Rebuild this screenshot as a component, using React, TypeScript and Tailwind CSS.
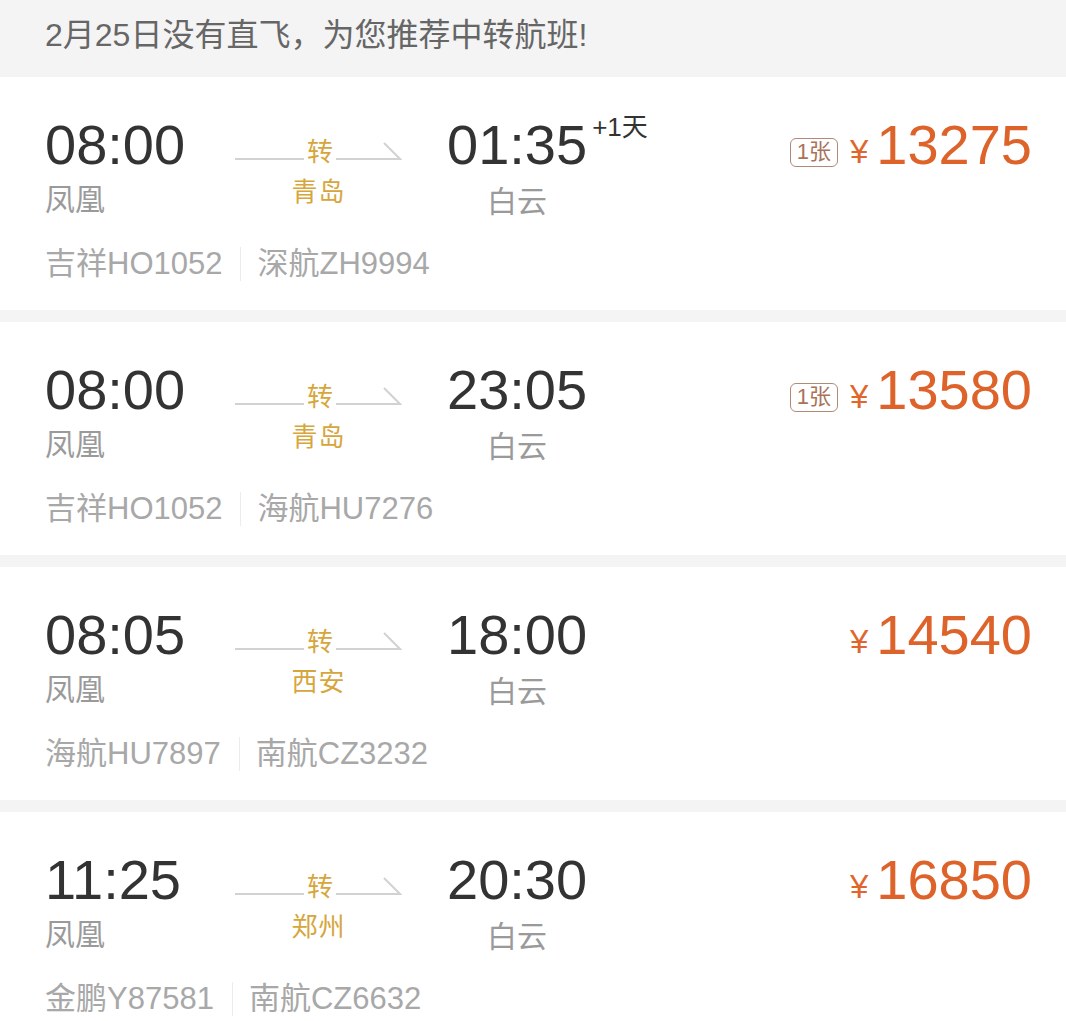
import type { ReactNode } from 'react';

type Flight = {
  dep: string;
  arr: string;
  plusDay?: string;
  from: string;
  via: string;
  to: string;
  price: string;
  tickets?: string;
  legs: [string, string];
};

const flights: Flight[] = [
  { dep: '08:00', arr: '01:35', plusDay: '+1天', from: '凤凰', via: '青岛', to: '白云', price: '13275', tickets: '1张', legs: ['吉祥HO1052', '深航ZH9994'] },
  { dep: '08:00', arr: '23:05', from: '凤凰', via: '青岛', to: '白云', price: '13580', tickets: '1张', legs: ['吉祥HO1052', '海航HU7276'] },
  { dep: '08:05', arr: '18:00', from: '凤凰', via: '西安', to: '白云', price: '14540', legs: ['海航HU7897', '南航CZ3232'] },
  { dep: '11:25', arr: '20:30', from: '凤凰', via: '郑州', to: '白云', price: '16850', legs: ['金鹏Y87581', '南航CZ6632'] },
];

const font = "font-['Liberation_Sans','Noto_Sans_CJK_SC',sans-serif]";

// 中转箭头：左线 + “转” + 右线带箭头
const TransferArrow = ({ via }: { via: string }) => (
  <div className="w-[167px] shrink-0 flex flex-col items-center pt-[26px]">
    <div className="flex items-end w-full h-[26px]">
      <div className="flex-1 h-[2px] bg-[#d2d2d2] mb-[5px]" />
      <span className="px-[3px] text-[26px] leading-[26px] text-[#d6a63c]">转</span>
      <svg width="66" height="20" viewBox="0 0 66 20" className="mb-[4px]">
        <path d="M0 18 H64 L48 2" fill="none" stroke="#d2d2d2" strokeWidth="2" />
      </svg>
    </div>
    <div className="mt-[14px] text-[26px] leading-[26px] text-[#d6a63c] tracking-[1px]">{via}</div>
  </div>
);

const Card = ({ f }: { f: Flight }) => (
  <div className="bg-white h-[233px] shrink-0 pl-[45px] pr-[34px] pt-[36px]">
    <div className="flex">
      {/* 出发 */}
      <div className="w-[190px] shrink-0 flex flex-col">
        <span className="text-[56px] leading-[64px] text-[#333]">{f.dep}</span>
        <span className="mt-[8px] text-[30px] leading-[30px] text-[#9a9a9a]">{f.from}</span>
      </div>

      <TransferArrow via={f.via} />

      {/* 到达 */}
      <div className="ml-[45px] flex flex-col items-center">
        <span className="relative text-[56px] leading-[64px] text-[#333]">
          {f.arr}
          {f.plusDay && (
            <span className="absolute left-full top-[0px] ml-[5px] whitespace-nowrap text-[26px] leading-[28px] text-[#333]">
              {f.plusDay}
            </span>
          )}
        </span>
        <span className="mt-[10px] text-[30px] leading-[30px] text-[#9a9a9a]">{f.to}</span>
      </div>

      {/* 价格 */}
      <div className="flex-1 flex justify-end items-center h-[64px]">
        {f.tickets && (
          <span className="mt-[14px] mr-[12px] h-[29px] px-[6px] flex items-center border border-[#b08a78] rounded-[6px] text-[22px] leading-[22px] text-[#a8735a]">
            {f.tickets}
          </span>
        )}
        <span className="mt-[12px] text-[33px] leading-[33px] text-[#e0662e]">¥</span>
        <span className="ml-[8px] text-[56px] leading-[64px] text-[#de632b]">{f.price}</span>
      </div>
    </div>

    {/* 航班号 */}
    <div className="mt-[30px] flex items-center text-[31px] leading-[30px] text-[#a8a8a8]">
      <span>{f.legs[0]}</span>
      <span className="ml-[18px] mr-[16px] w-px h-[34px] bg-[#ececec]" />
      <span>{f.legs[1]}</span>
    </div>
  </div>
);

const Gap = (): ReactNode => <div className="h-[12px] shrink-0 bg-[#f4f4f4]" />;

export default function App() {
  return (
    <div className={`${font} w-[1066px] h-[1021px] overflow-hidden bg-[#f4f4f4] flex flex-col`}>
      <div className="h-[77px] shrink-0 pl-[45px] pt-[17px] text-[32px] leading-[36px] text-[#666]">
        2月25日没有直飞，为您推荐中转航班!
      </div>
      {flights.map((f, i) => (
        <div key={i} className="flex flex-col">
          {i > 0 && <Gap />}
          <Card f={f} />
        </div>
      ))}
    </div>
  );
}
